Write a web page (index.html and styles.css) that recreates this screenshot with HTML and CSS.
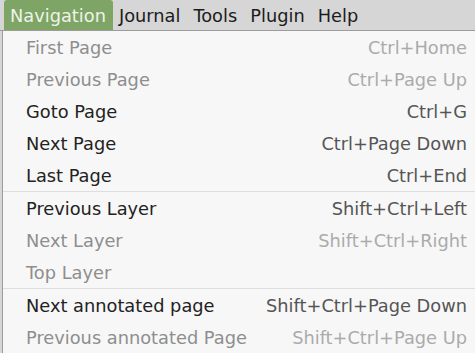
FILE: index.html
```html
<!DOCTYPE html>
<html lang="en">
<head>
    <meta charset="UTF-8">
    <title>Navigation menu</title>
    <link rel="stylesheet" href="styles.css">
</head>
<body>
    <div class="menubar">
        <span class="menubar-item active">Navigation</span>
        <span class="menubar-item">Journal</span>
        <span class="menubar-item">Tools</span>
        <span class="menubar-item">Plugin</span>
        <span class="menubar-item">Help</span>
    </div>
    <div class="menu">
        <div class="menu-item disabled"><span>First Page</span><span class="accel">Ctrl+Home</span></div>
        <div class="menu-item disabled"><span>Previous Page</span><span class="accel">Ctrl+Page Up</span></div>
        <div class="menu-item"><span>Goto Page</span><span class="accel">Ctrl+G</span></div>
        <div class="menu-item"><span>Next Page</span><span class="accel">Ctrl+Page Down</span></div>
        <div class="menu-item"><span>Last Page</span><span class="accel">Ctrl+End</span></div>
        <div class="separator"></div>
        <div class="menu-item"><span>Previous Layer</span><span class="accel">Shift+Ctrl+Left</span></div>
        <div class="menu-item disabled"><span>Next Layer</span><span class="accel">Shift+Ctrl+Right</span></div>
        <div class="menu-item disabled"><span>Top Layer</span><span class="accel"></span></div>
        <div class="separator"></div>
        <div class="menu-item"><span>Next annotated page</span><span class="accel">Shift+Ctrl+Page Down</span></div>
        <div class="menu-item disabled"><span>Previous annotated Page</span><span class="accel">Shift+Ctrl+Page Up</span></div>
    </div>
</body>
</html>
```

FILE: styles.css
```css
body {
    font-family: "DejaVu Sans", sans-serif;
    font-size: 17.8px;
    margin: 0;
    padding: 0;
    background-color: #d6d6d6;
    overflow: hidden;
}
.menubar {
    display: flex;
    height: 30px;
    padding-left: 4px;
    background-color: #d6d6d6;
    border-bottom: 1px solid #9c9c9c;
}
.menubar-item {
    display: flex;
    align-items: center;
    padding: 0 7px 0 6px;
    color: #1c1c1c;
}
.menubar-item.active {
    background-color: #7ea566;
    color: #eef3e6;
    border-radius: 3px 3px 0 0;
}
.menu {
    margin-left: 2px;
    background-color: #f7f7f7;
    border-left: 1px solid #9c9c9c;
    height: 322px;
}
.menu-item {
    display: flex;
    justify-content: space-between;
    align-items: center;
    height: 32px;
    padding: 0 8px 0 23px;
    color: #222222;
}
.menu-item .accel {
    color: #555555;
}
.menu-item.disabled {
    color: #8e8e8e;
}
.menu-item.disabled .accel {
    color: #ababab;
}
.separator {
    height: 1px;
    background-color: #dedede;
}
```
